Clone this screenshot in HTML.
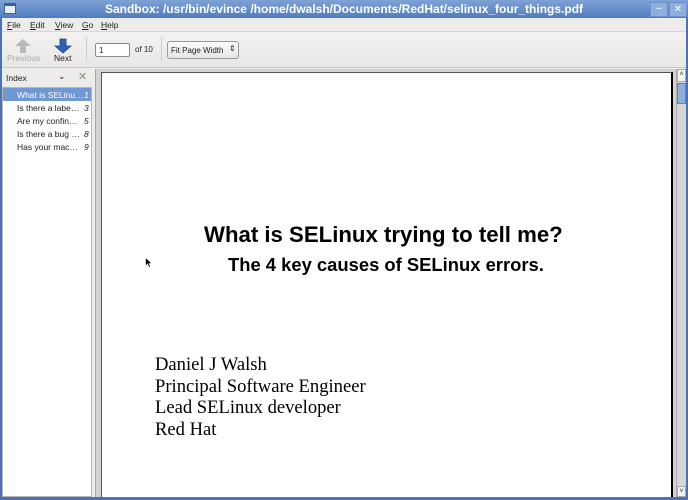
<!DOCTYPE html>
<html><head><style>
*{margin:0;padding:0;box-sizing:border-box}
body{width:688px;height:500px;overflow:hidden;background:#4a73b5;font-family:"Liberation Sans",sans-serif;font-size:8px;color:#222;position:relative}
.abs{position:absolute}
#title{left:0;top:0;width:688px;height:18px;background:linear-gradient(#7fa2d6,#4f7cc0);color:#fff;font-weight:bold;font-size:12px;line-height:18px;text-align:center}
#win{left:2px;top:18px;width:684px;height:479px;background:#edeceb}
#menu{left:2px;top:18px;width:684px;height:14px;background:#edeceb;border-bottom:1px solid #d8d6d3}
#menu span{position:absolute;top:2px;font-size:8.5px}
#tb{left:2px;top:32px;width:684px;height:36px;background:linear-gradient(#f3f2f1,#e8e7e5);border-bottom:1px solid #c9c7c3}
.it{font-size:8.5px}
</style></head><body>
<div class="abs" id="title">Sandbox: /usr/bin/evince /home/dwalsh/Documents/RedHat/selinux_four_things.pdf</div>
<div class="abs" style="left:4px;top:3px;width:12px;height:11px;background:#e8eef8;border:1px solid #3b5f98;border-top:3px solid #3b5f98"></div>
<div class="abs" style="left:650px;top:2px;width:18px;height:15px;background:#8eaedc;border:1px solid #6b8fc8;color:#fff;text-align:center;font-size:10px;line-height:12px">–</div>
<div class="abs" style="left:669px;top:2px;width:18px;height:15px;background:#8eaedc;border:1px solid #6b8fc8;color:#fff;text-align:center;font-size:10px;line-height:13px">✕</div>
<div class="abs" id="win"></div>
<div class="abs" id="menu"><span style="left:5px"><u>F</u>ile</span><span style="left:28px"><u>E</u>dit</span><span style="left:53px"><u>V</u>iew</span><span style="left:80px"><u>G</u>o</span><span style="left:99px"><u>H</u>elp</span></div>
<div class="abs" id="tb"></div>
<svg class="abs" style="left:14px;top:38px" width="18" height="16"><path d="M9 1 L17 8 L12 8 L12 15 L6 15 L6 8 L1 8 Z" fill="#b9b9b9"/></svg>
<div class="abs" style="left:7px;top:53px;font-size:8.5px;color:#a9a9a9">Previous</div>
<svg class="abs" style="left:54px;top:38px" width="18" height="16"><path d="M6 1 L12 1 L12 8 L17 8 L9 15 L1 8 L6 8 Z" fill="#2d63b6" stroke="#1b4587" stroke-width="0.8"/></svg>
<div class="abs" style="left:54px;top:53px;font-size:8.5px;color:#222">Next</div>
<div class="abs" style="left:86px;top:37px;width:1px;height:24px;background:#cfcdc9"></div>
<div class="abs" style="left:95px;top:43px;width:35px;height:14px;background:#fff;border:1px solid #8b8a87;border-radius:2px;font-size:8px;padding:2px 3px">1</div>
<div class="abs" style="left:135px;top:45px;font-size:8px">of 10</div>
<div class="abs" style="left:161px;top:37px;width:1px;height:24px;background:#cfcdc9"></div>
<div class="abs" style="left:167px;top:41px;width:72px;height:18px;background:linear-gradient(#fbfbfa,#e6e5e3);border:1px solid #9a9893;border-radius:3px;font-size:8px;padding:4px 3px">Fit Page Width <span style="position:absolute;left:61px;top:2px;font-size:8px">⇕</span></div>
<!-- sidebar -->
<div class="abs" style="left:2px;top:69px;width:90px;height:428px;background:#edeceb"></div>
<div class="abs" style="left:6px;top:73px;font-size:8.5px">Index</div>
<div class="abs" style="left:58px;top:71px;font-size:9px">⌄</div>
<div class="abs" style="left:78px;top:70px;font-size:11px;color:#888">✕</div>
<div class="abs" style="left:2px;top:87px;width:90px;height:410px;background:#fff;border:1px solid #b9b7b3"></div>
<div class="abs" style="left:3px;top:88px;width:88px;height:13px;background:#6f98d2"></div>
<div class="abs it" style="left:17px;top:90px;color:#fff">What is SELinu…</div><div class="abs it" style="left:84px;top:90px;color:#fff;font-style:italic">1</div>
<div class="abs it" style="left:17px;top:103px">Is there a labe…</div><div class="abs it" style="left:84px;top:103px;font-style:italic">3</div>
<div class="abs it" style="left:17px;top:116px">Are my confin…</div><div class="abs it" style="left:84px;top:116px;font-style:italic">5</div>
<div class="abs it" style="left:17px;top:129px">Is there a bug …</div><div class="abs it" style="left:84px;top:129px;font-style:italic">8</div>
<div class="abs it" style="left:17px;top:142px">Has your mac…</div><div class="abs it" style="left:84px;top:142px;font-style:italic">9</div>
<!-- page area -->
<div class="abs" style="left:95px;top:69px;width:581px;height:428px;background:#d4d2ce;border-left:1px solid #a9a7a3"></div>
<div class="abs" style="left:101px;top:72px;width:572px;height:425px;background:#fff;border-left:1px solid #555;border-top:1px solid #555;border-right:2px solid #000"></div>
<div class="abs" style="left:204px;top:222px;font-size:22.2px;font-weight:bold;color:#000;white-space:nowrap">What is SELinux trying to tell me?</div>
<div class="abs" style="left:228px;top:254px;font-size:18.4px;font-weight:bold;color:#000;white-space:nowrap">The 4 key causes of SELinux errors.</div>
<div class="abs" style="left:155px;top:354px;font-family:'Liberation Serif',serif;font-size:18.6px;line-height:21.7px;color:#000">Daniel J Walsh<br>Principal Software Engineer<br>Lead SELinux developer<br>Red Hat</div>
<svg class="abs" style="left:145px;top:257px" width="8" height="12"><path d="M0.5 0.5 L0.5 9 L2.5 7 L4 10.5 L5.5 10 L4 6.5 L7 6.5 Z" fill="#000" stroke="#fff" stroke-width="0.6"/></svg>
<!-- scrollbar -->
<div class="abs" style="left:676px;top:69px;width:10px;height:428px;background:#d8d6d2;border-left:1px solid #b0aeaa"></div>
<div class="abs" style="left:677px;top:69px;width:9px;height:13px;background:#f5f4f2;border:1px solid #aaa;font-size:7px;text-align:center;line-height:10px">˄</div>
<div class="abs" style="left:677px;top:83px;width:9px;height:21px;background:#8fb0de;border:1px solid #5d83bd"></div>
<div class="abs" style="left:677px;top:486px;width:9px;height:11px;background:#f5f4f2;border:1px solid #aaa;font-size:7px;text-align:center;line-height:9px">˅</div>
</body></html>
